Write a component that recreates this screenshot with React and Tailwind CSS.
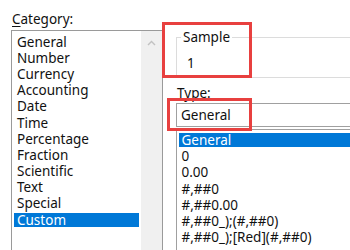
import React from "react";

const categories = [
  "General",
  "Number",
  "Currency",
  "Accounting",
  "Date",
  "Time",
  "Percentage",
  "Fraction",
  "Scientific",
  "Text",
  "Special",
  "Custom",
];

const types = [
  "General",
  "0",
  "0.00",
  "#,##0",
  "#,##0.00",
  "#,##0_);(#,##0)",
  "#,##0_);[Red](#,##0)",
];

const Row = ({ label, selected }) => (
  <div className="h-[16.2px] flex items-center">
    <div
      className={
        "h-[14px] w-full leading-[14px] pl-[3px] whitespace-nowrap " +
        (selected ? "bg-[#0078d7] text-white" : "")
      }
    >
      {label}
    </div>
  </div>
);

export default function App() {
  return (
    <div
      className="relative w-[350px] h-[250px] overflow-hidden bg-white flex text-[13.5px] text-[#111]"
      style={{ fontFamily: '"Noto Sans", "Open Sans", sans-serif' }}
    >
      {/* category column */}
      <div className="w-[163px] shrink-0 pl-[11px] pt-[11px]">
        <div className="h-[19px] leading-[16px] pl-[1px]">
          <span className="underline underline-offset-2">C</span>ategory:
        </div>
        <div className="w-[152px] h-[240px] border border-[#9a9a9a] flex">
          <div className="flex-1 pt-[2.5px] px-[2px]">
            {categories.map((c) => (
              <Row key={c} label={c} selected={c === "Custom"} />
            ))}
          </div>
          <div className="w-[21px] bg-[#f0f0f0] pt-[9px]">
            <svg width="9" height="6" viewBox="0 0 9 6" className="mx-auto">
              <path
                d="M1 5 L4.5 1.5 L8 5"
                fill="none"
                stroke="#c2c2c2"
                strokeWidth="1.4"
              />
            </svg>
          </div>
        </div>
      </div>

      {/* sample and type column */}
      <div className="flex-1 pl-[13px] min-w-0">
        <fieldset className="mt-[29px] h-[49px] border-t border-l border-b border-[#dcdcdc]">
          <legend className="ml-[4px] px-[2px] leading-[16px]">Sample</legend>
          <div className="mt-[10px] pl-[10px] leading-[16px]">1</div>
        </fieldset>
        <div className="mt-[7px] pl-[1px] leading-[16px]">
          <span className="underline underline-offset-2">T</span>ype:
        </div>
        <div className="mt-[2px] h-[24px] w-[200px] border border-[#a0a0a0] pl-[4px] flex items-center">
          General
        </div>
        <div className="mt-[2px] w-[200px] h-[140px] border border-[#a0a0a0] pt-[2px] pl-[1.5px]">
          {types.map((t) => (
            <Row key={t} label={t} selected={t === "General"} />
          ))}
        </div>
      </div>

      {/* red annotation boxes */}
      <div className="absolute left-[162px] top-[22px] w-[90px] h-[56px] border-[3.5px] border-[#e8403f]" />
      <div className="absolute left-[167px] top-[98px] w-[85px] h-[33px] border-[3.5px] border-[#e8403f]" />
    </div>
  );
}
